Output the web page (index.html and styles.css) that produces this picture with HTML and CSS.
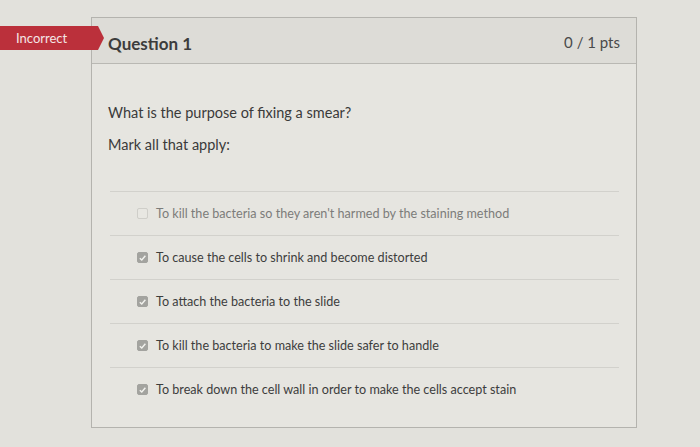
FILE: index.html
```html
<!DOCTYPE html>
<html>
<head>
<meta charset="utf-8">
<link rel="stylesheet" href="styles.css">
</head>
<body>
<div class="page">
  <div class="flag">Incorrect</div>
  <div class="card">
    <div class="card-head">
      <span class="q-title">Question 1</span>
      <span class="pts">0 / 1 pts</span>
    </div>
    <div class="card-body">
      <p class="q-text">What is the purpose of fixing a smear?</p>
      <p class="q-text q-sub">Mark all that apply:</p>
      <div class="answers">
        <div class="answer faded"><span class="box"></span><span>To kill the bacteria so they aren't harmed by the staining method</span></div>
        <div class="answer"><span class="box checked"><svg viewBox="0 0 10 10" width="10" height="10"><path d="M2 5.2 L4.2 7.3 L8.2 2.6" fill="none" stroke="#f2f2ee" stroke-width="1.6"/></svg></span><span>To cause the cells to shrink and become distorted</span></div>
        <div class="answer"><span class="box checked"><svg viewBox="0 0 10 10" width="10" height="10"><path d="M2 5.2 L4.2 7.3 L8.2 2.6" fill="none" stroke="#f2f2ee" stroke-width="1.6"/></svg></span><span>To attach the bacteria to the slide</span></div>
        <div class="answer"><span class="box checked"><svg viewBox="0 0 10 10" width="10" height="10"><path d="M2 5.2 L4.2 7.3 L8.2 2.6" fill="none" stroke="#f2f2ee" stroke-width="1.6"/></svg></span><span>To kill the bacteria to make the slide safer to handle</span></div>
        <div class="answer"><span class="box checked"><svg viewBox="0 0 10 10" width="10" height="10"><path d="M2 5.2 L4.2 7.3 L8.2 2.6" fill="none" stroke="#f2f2ee" stroke-width="1.6"/></svg></span><span>To break down the cell wall in order to make the cells accept stain</span></div>
      </div>
    </div>
  </div>
</div>
</body>
</html>
```
FILE: styles.css
```css
html, body {
  margin: 0;
  padding: 0;
}
body {
  background: #e2e1dc;
  font-family: Lato, "Open Sans", sans-serif;
  color: #3a3a3a;
  width: 700px;
  height: 447px;
  overflow: hidden;
}
.page {
  position: relative;
  padding: 17px 63px 20px 91px;
}
.flag {
  position: absolute;
  left: 0;
  top: 26px;
  width: 98px;
  height: 24px;
  background: #bb303b;
  color: #f4e6e6;
  font-size: 13px;
  line-height: 24px;
  padding-left: 16px;
  box-sizing: border-box;
}
.flag::after {
  content: "";
  position: absolute;
  right: -6px;
  top: 0;
  border-top: 12px solid transparent;
  border-bottom: 12px solid transparent;
  border-left: 6px solid #bb303b;
}
.card {
  border: 1px solid #b4b3ae;
  background: #e6e5e0;
  height: 411px;
  box-sizing: border-box;
}
.card-head {
  display: flex;
  justify-content: space-between;
  align-items: center;
  height: 46px;
  padding: 0 16px 0 16px;
  background: #dddcd7;
  border-bottom: 1px solid #b9b8b3;
  box-sizing: border-box;
}
.q-title {
  font-size: 17px;
  font-weight: 700;
  color: #3c3c3c;
  padding-top: 5px;
}
.pts {
  font-size: 15px;
  color: #4a4a4a;
  padding-top: 3px;
}
.card-body {
  padding: 39px 17px 0 16px;
}
.q-text {
  margin: 0;
  font-size: 14.5px;
  line-height: 20px;
  color: #3a3a3a;
}
.q-sub {
  margin-top: 12px;
}
.answers {
  margin-top: 36px;
  margin-left: 2px;
}
.answer {
  display: flex;
  align-items: center;
  gap: 8px;
  height: 44px;
  border-top: 1px solid #d2d1cc;
  padding-left: 27px;
  font-size: 12.6px;
  color: #3d3d3d;
  box-sizing: border-box;
}
.answer.faded {
  color: #7c7c7a;
}
.box {
  width: 11px;
  height: 11px;
  box-sizing: border-box;
  border: 1px solid #cfcec9;
  border-radius: 2px;
  background: #e8e7e2;
  display: flex;
  align-items: center;
  justify-content: center;
}
.box.checked {
  background: #a3a39f;
  border-color: #a3a39f;
}
.box svg {
  display: block;
}
```
